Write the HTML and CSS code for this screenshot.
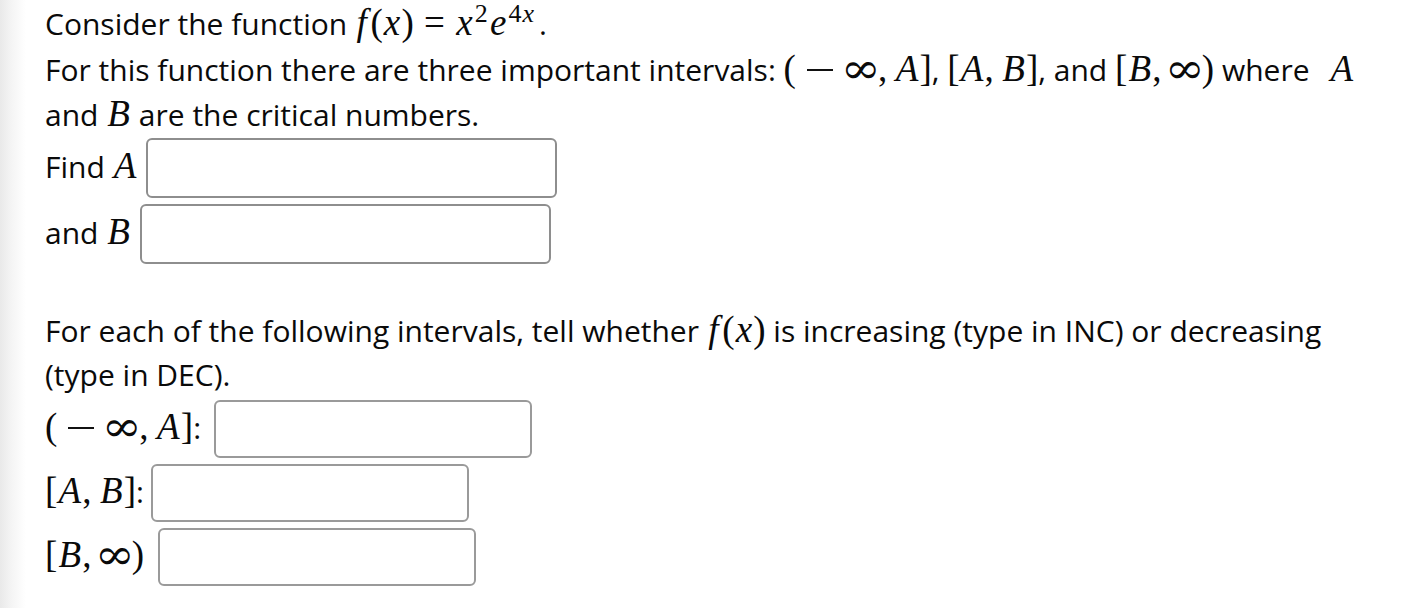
FILE: index.html
```html
<!DOCTYPE html>
<html>
<head>
<meta charset="utf-8">
<link rel="stylesheet" href="styles.css">
</head>
<body>
<div class="page">
  <div class="problem">
    <p class="line">Consider the function <span class="m"><i class="f">f</i>(<i>x</i>)<span class="rel">=</span><i>x</i><sup class="s2">2</sup><i>e</i><sup class="s4">4<i>x</i></sup></span><span class="dot">.</span></p>
    <p class="line">For this function there are three important intervals: <span class="m">(<span class="minus" aria-label="−"></span><span class="inf">∞</span>,<span class="th"></span><i>A</i>]</span>, <span class="m">[<i>A</i>,<span class="th"></span><i>B</i>]</span>, and <span class="m">[<i>B</i>,<span class="th"></span><span class="inf">∞</span>)</span> where <span class="m tail"><i>A</i></span></p>
    <p class="line">and <span class="m"><i>B</i></span> are the critical numbers.</p>
    <div class="row r1"><span class="label">Find <span class="m"><i>A</i></span></span><span class="box wide"></span></div>
    <div class="row r2"><span class="label">and <span class="m"><i>B</i></span></span><span class="box wide"></span></div>
    <p class="line gapline">For each of the following intervals, tell whether <span class="m"><i class="f">f</i>(<i>x</i>)</span> is increasing (type in INC) or decreasing</p>
    <p class="line">(type in DEC).</p>
    <div class="row r3"><span class="label"><span class="m">(<span class="minus" aria-label="−"></span><span class="inf">∞</span>,<span class="th"></span><i>A</i>]</span>:</span><span class="box narrow"></span></div>
    <div class="row r4"><span class="label"><span class="m">[<i>A</i>,<span class="th"></span><i>B</i>]</span>:</span><span class="box narrow"></span></div>
    <div class="row r5"><span class="label"><span class="m">[<i>B</i>,<span class="th"></span><span class="inf">∞</span>)</span></span><span class="box narrow"></span></div>
  </div>
</div>
</body>
</html>
```
FILE: styles.css
```css
html, body {
  margin: 0;
  padding: 0;
  background: #fff;
}
.page {
  width: 1418px;
  height: 608px;
  background: linear-gradient(to right, #e9e9e9 0px, #f5f5f5 12px, #ffffff 26px);
  overflow: hidden;
}
.problem {
  padding: 0 0 0 45px;
  font-family: "Open Sans", sans-serif;
  font-size: 30px;
  color: #0a0a0a;
}
.line {
  margin: 0;
  line-height: 45.5px;
  height: 45.5px;
  white-space: nowrap;
}
.m {
  font-family: "Liberation Serif", "DejaVu Serif", serif;
  font-size: 37px;
}
.m i {
  font-style: italic;
  padding: 0 0.03em;
}
.m i.f {
  padding: 0 0.1em 0 0.04em;
}
.m sup {
  font-size: 26px;
  line-height: 0;
  vertical-align: 13px;
}
.m sup i {
  padding: 0 0.04em;
}
.s2 { margin: 0 1px 0 1px; }
.s4 { margin-left: 1px; }
.dot { margin-left: 4px; }
.tail { margin-left: 12px; }
.rel {
  margin: 0 0.278em;
}
.minus {
  display: inline-block;
  width: 26px;
  height: 2px;
  background: #111;
  vertical-align: 10px;
  margin: 0 12px 0 11px;
}
.inf {
  display: inline-block;
  width: 29px;
  text-align: center;
  font-family: "DejaVu Serif", serif;
  font-size: 1em;
  line-height: 0;
  transform: scale(1.3, 1.15);
  margin-right: 4px;
}
.th {
  display: inline-block;
  width: 0.2em;
}
.row {
  display: flex;
  align-items: center;
  height: 60px;
  margin-bottom: 6px;
}
.r1 { margin-top: 1px; }
.label {
  white-space: nowrap;
  margin-right: 9px;
  padding-bottom: 4px;
}
.r3 .label { margin-right: 13px; }
.r4 .label { margin-right: 7px; }
.r5 .label { margin-right: 14px; }
.box {
  box-sizing: border-box;
  height: 60px;
  border: 2px solid #8e8e8e;
  border-radius: 6px;
  background: #fff;
}
.wide { width: 411px; }
.narrow { width: 318px; height: 58px; border-color: #9a9a9a; }
.r3, .r4, .r5 { height: 58px; }
.gapline { margin-top: 43px; }
.r3 { margin-top: 2px; }
```
